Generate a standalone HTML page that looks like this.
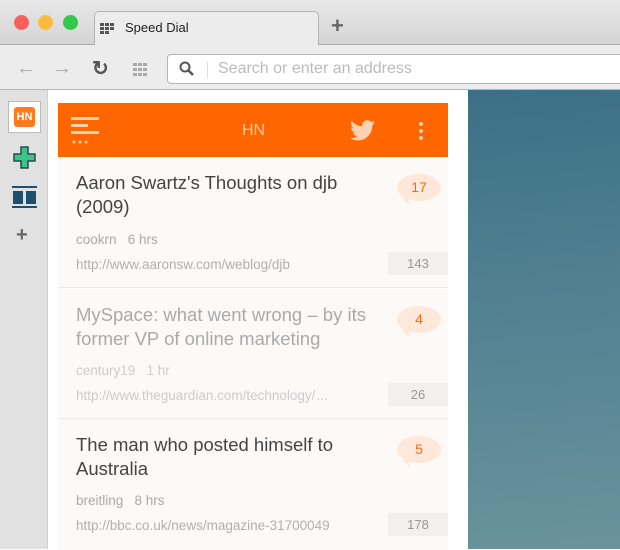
<!DOCTYPE html><html><head><style>
*{margin:0;padding:0;box-sizing:border-box}
body{width:620px;height:549px;overflow:hidden;position:relative;font-family:"Liberation Sans",sans-serif;background:#fff}
.abs{position:absolute}
.tabbar{left:0;top:0;width:620px;height:45px;background:linear-gradient(#e8e8e8,#d4d4d4);border-bottom:1px solid #a9a9a9}
.dot{width:15px;height:15px;border-radius:50%;top:15px}
.tab{left:94px;top:11px;width:225px;height:35px;background:#ececec;border:1px solid #b5b5b5;border-bottom:none;border-radius:5px 5px 0 0}
.toolbar{left:0;top:45px;width:620px;height:45px;background:#ececec;border-bottom:1px solid #b8b8b8}
.addr{left:167px;top:54px;width:470px;height:30px;background:#fff;border:1px solid #b5b5b5;border-radius:4px}
.side{left:0;top:90px;width:48px;height:459px;background:#e1e1e1;border-right:1px solid #d0d0d0}
.bg{left:468px;top:90px;width:152px;height:459px;background:linear-gradient(175deg,#3c7085,#4f7f91 40%,#6a939b)}
.hdr{left:58px;top:103px;width:390px;height:54px;background:#ff6600}
.item{left:58px;width:390px;height:131px;background:#fdf9f7;border-bottom:1px solid #ede8e5}
.t{position:absolute;left:18px;top:14px;width:300px;font-size:18.5px;line-height:24px;color:#444}
.m{position:absolute;left:18px;font-size:13.5px;color:#aaa}
.u{position:absolute;left:18px;font-size:13.5px;color:#b0b0b0;white-space:nowrap}
.cnt{position:absolute;left:330px;width:60px;height:23px;background:#f3efed;color:#999;font-size:13px;text-align:center;line-height:23px}
.bub{position:absolute;left:339px;width:44px;height:27px;border-radius:50%;background:#fde8d9;color:#ff6a10;font-size:14px;text-align:center;line-height:27px}
.bub:after{content:"";position:absolute;left:6px;bottom:-5px;border-left:6px solid transparent;border-top:8px solid #fde8d9;transform:skewX(20deg)}
</style></head><body>
<div class="abs tabbar"></div>
<div class="abs dot" style="left:14px;background:#fc605c"></div>
<div class="abs dot" style="left:38px;background:#fdbc40"></div>
<div class="abs dot" style="left:63px;background:#34c84a"></div>
<div class="abs tab"></div>
<svg class="abs" style="left:100px;top:23px" width="16" height="11"><g fill="#555"><rect x="0" y="0" width="4" height="3"/><rect x="5" y="0" width="4" height="3"/><rect x="10" y="0" width="4" height="3"/><rect x="0" y="4" width="4" height="3"/><rect x="5" y="4" width="4" height="3"/><rect x="10" y="4" width="4" height="3"/><rect x="0" y="8" width="4" height="3"/><rect x="5" y="8" width="4" height="3"/></g></svg>
<div class="abs" style="left:125px;top:20px;font-size:13px;color:#222">Speed Dial</div>
<div class="abs" style="left:331px;top:13px;font-size:22px;color:#666;font-weight:bold">+</div>
<div class="abs toolbar"></div>
<div class="abs" style="left:16px;top:57px;font-size:20px;color:#aaa">&#8592;</div>
<div class="abs" style="left:52px;top:57px;font-size:20px;color:#aaa">&#8594;</div>
<div class="abs" style="left:92px;top:56px;font-size:20px;color:#555;font-weight:bold">&#8635;</div>
<svg class="abs" style="left:133px;top:63px" width="18" height="14"><g fill="#aaa"><rect x="0" y="0" width="4" height="3"/><rect x="5" y="0" width="4" height="3"/><rect x="10" y="0" width="4" height="3"/><rect x="0" y="5" width="4" height="3"/><rect x="5" y="5" width="4" height="3"/><rect x="10" y="5" width="4" height="3"/><rect x="0" y="10" width="4" height="3"/><rect x="5" y="10" width="4" height="3"/><rect x="10" y="10" width="4" height="3"/></g></svg>
<div class="abs addr"></div>
<svg class="abs" style="left:179px;top:61px" width="16" height="16"><circle cx="6" cy="6" r="4.5" fill="none" stroke="#555" stroke-width="2"/><line x1="9.5" y1="9.5" x2="14" y2="14" stroke="#555" stroke-width="2.5"/></svg>
<div class="abs" style="left:207px;top:62px;width:1px;height:16px;background:#ddd"></div>
<div class="abs" style="left:218px;top:60px;font-size:16px;color:#bbb">Search or enter an address</div>
<div class="abs side"></div>
<div class="abs" style="left:8px;top:101px;width:33px;height:32px;background:#fff;border:1px solid #bbb"></div>
<div class="abs" style="left:14px;top:107px;width:21px;height:20px;background:#ff7a1a;border-radius:3px;color:#fff;font-size:11px;font-weight:bold;text-align:center;line-height:20px">HN</div>
<svg class="abs" style="left:13px;top:146px" width="23" height="23"><path d="M8 1h7v7h7v7h-7v7H8v-7H1V8h7z" fill="#3cc48a" stroke="#2a4a4a" stroke-width="1.5"/></svg>
<svg class="abs" style="left:12px;top:186px" width="25" height="23"><rect x="0" y="0" width="25" height="2" fill="#1d4f6e"/><rect x="1" y="5" width="10" height="13" fill="#1d4f6e"/><rect x="14" y="5" width="10" height="13" fill="#1d4f6e"/><rect x="0" y="20" width="25" height="2" fill="#1d4f6e"/></svg>
<div class="abs" style="left:16px;top:224px;font-size:20px;color:#666;font-weight:bold">+</div>
<div class="abs bg"></div>
<div class="abs hdr"></div>
<svg class="abs" style="left:71px;top:116px" width="30" height="30"><g fill="#ffd1b0"><rect x="0" y="1" width="28" height="3"/><rect x="0" y="8" width="17" height="3"/><rect x="0" y="15" width="28" height="3"/><circle cx="3" cy="26" r="1.5"/><circle cx="9" cy="26" r="1.5"/><circle cx="15" cy="26" r="1.5"/></g></svg>
<div class="abs" style="left:242px;top:122px;font-size:16px;color:#ffc9a0">HN</div>
<svg class="abs" style="left:350px;top:120px" width="25" height="21" viewBox="0 0 24 20"><path fill="#ffd1b0" d="M24 2.4c-.9.4-1.8.6-2.8.8 1-.6 1.8-1.6 2.2-2.7-1 .6-2 1-3.1 1.2C19.3.7 18 0 16.6 0c-2.7 0-4.9 2.2-4.9 4.9 0 .4 0 .8.1 1.1C7.7 5.8 4.1 3.9 1.7.9c-.4.7-.7 1.6-.7 2.5 0 1.7.9 3.2 2.2 4.1-.8 0-1.6-.2-2.2-.6v.1c0 2.4 1.7 4.4 3.9 4.8-.4.1-.8.2-1.3.2-.3 0-.6 0-.9-.1.6 2 2.4 3.4 4.6 3.4-1.7 1.3-3.8 2.1-6.1 2.1-.4 0-.8 0-1.2-.1 2.2 1.4 4.8 2.2 7.5 2.2 9.1 0 14-7.5 14-14v-.6c1-.7 1.8-1.6 2.5-2.5z"/></svg>
<svg class="abs" style="left:418px;top:121px" width="6" height="20"><g fill="#ffd1b0"><circle cx="3" cy="3" r="2"/><circle cx="3" cy="10" r="2"/><circle cx="3" cy="17" r="2"/></g></svg>

<div class="abs item" style="top:157px">
<div class="t">Aaron Swartz's Thoughts on djb (2009)</div>
<div class="bub" style="top:17px">17</div>
<div class="m" style="top:75px">cookrn&nbsp;&nbsp;&nbsp;6 hrs</div>
<div class="u" style="top:100px">http://www.aaronsw.com/weblog/djb</div>
<div class="cnt" style="top:95px">143</div>
</div>
<div class="abs item" style="top:289px;height:130px">
<div class="t" style="color:#aaa">MySpace: what went wrong – by its former VP of online marketing</div>
<div class="bub" style="top:17px">4</div>
<div class="m" style="top:74px;color:#ccc">century19&nbsp;&nbsp;&nbsp;1 hr</div>
<div class="u" style="top:99px;color:#ccc">http://www.theguardian.com/technology/…</div>
<div class="cnt" style="top:94px">26</div>
</div>
<div class="abs item" style="top:419px;border:none">
<div class="t">The man who posted himself to Australia</div>
<div class="bub" style="top:17px">5</div>
<div class="m" style="top:74px">breitling&nbsp;&nbsp;&nbsp;8 hrs</div>
<div class="u" style="top:99px">http://bbc.co.uk/news/magazine-31700049</div>
<div class="cnt" style="top:94px">178</div>
</div>
</body></html>
